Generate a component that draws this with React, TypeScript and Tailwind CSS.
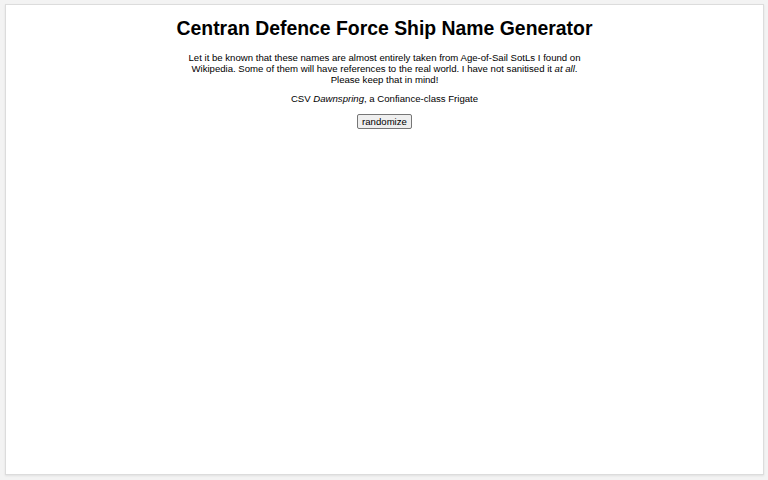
export default function App() {
  return (
    <div className="w-[768px] h-[480px] bg-[#f3f3f3] pt-[4px] pl-[5px]" style={{ fontFamily: '"Liberation Sans", Arial, sans-serif' }}>
      <div className="w-[759px] h-[471px] bg-white border border-[#dcdcdc] shadow-[0_1px_2px_rgba(0,0,0,0.08)] flex flex-col items-center text-black">
        <h1 className="mt-[12px] text-[19.4px] font-bold leading-[22px]">Centran Defence Force Ship Name Generator</h1>
        <p className="mt-[13px] text-center text-[9.6px] leading-[11px] whitespace-nowrap">
          <span className="block">Let it be known that these names are almost entirely taken from Age-of-Sail SotLs I found on</span>
          <span className="block">Wikipedia. Some of them will have references to the real world. I have not sanitised it <i>at all</i>.</span>
          <span className="block">Please keep that in mind!</span>
        </p>
        <p className="mt-[8px] text-[9.6px] leading-[12px]">
          CSV <i>Dawnspring</i>, a Confiance-class Frigate
        </p>
        <button className="mt-[9px] px-[4px] h-[15px] text-[9.6px] leading-[12px] bg-[#efefef] border border-[#767676] rounded-[2px]">randomize</button>
      </div>
    </div>
  );
}
